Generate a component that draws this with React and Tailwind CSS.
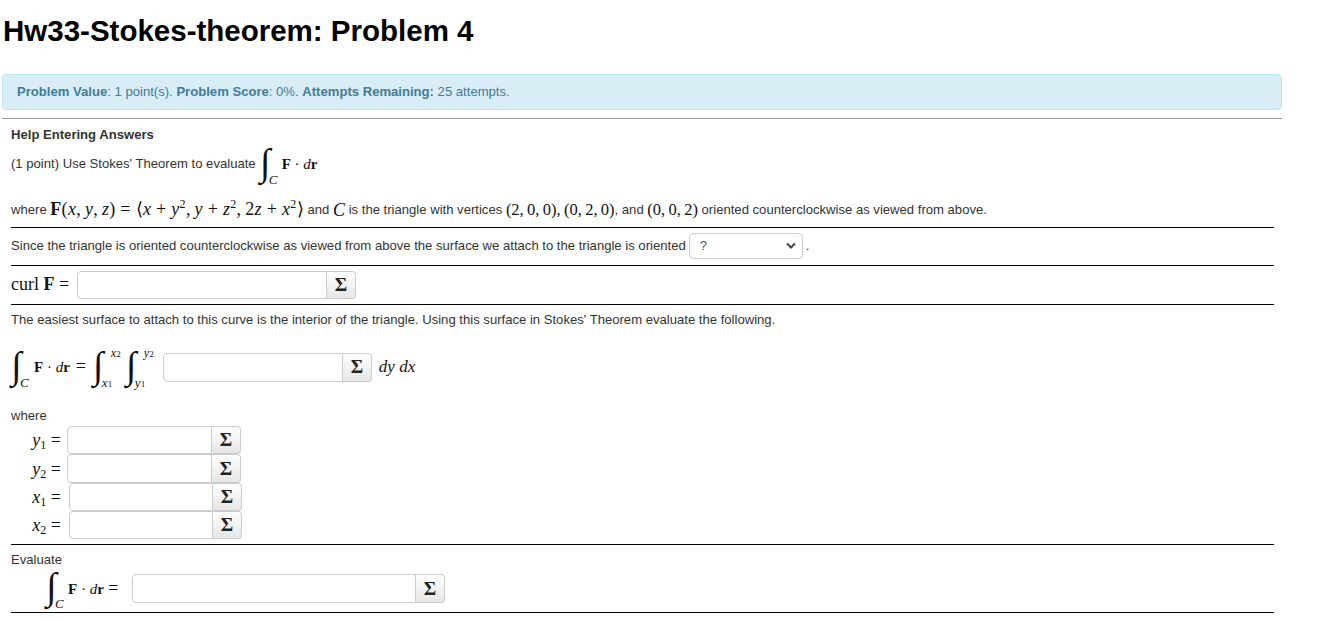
import React from "react";

const serif = "font-['Liberation_Serif',serif]";
const THIN = "\u2009";

const Mi = ({ children }) => <i className="italic">{children}</i>;
const Bf = ({ children }) => <b className="font-bold">{children}</b>;
const Sup = ({ children }) => (
  <span className="relative -top-[7px] text-[12px] leading-none">{children}</span>
);
const Sub = ({ children }) => (
  <span className="relative top-[3px] text-[12px] leading-none">{children}</span>
);

const Math = ({ children, size = "text-[18px]" }) => (
  <span className={`${serif} ${size} whitespace-pre text-[#111]`}>{children}</span>
);

// integral sign with lower bound and optional upper bound
const Integral = ({ lower, lowerSub, upper, upperSub, width = "w-[25px]" }) => (
  <span className={`${serif} relative inline-block h-[42px] shrink-0 text-[#111] ${width}`}>
    <span className="absolute left-0 top-[-3px] text-[38px] italic leading-[44px]">∫</span>
    {upper ? (
      <span className="absolute left-[18px] top-[1px] text-[12px] italic leading-none">
        {upper}
        <span className="text-[9px] not-italic">{upperSub}</span>
      </span>
    ) : null}
    <span className="absolute bottom-[-1px] left-[9px] text-[13px] italic leading-none">
      {lower}
      <span className="text-[9px] not-italic">{lowerSub}</span>
    </span>
  </span>
);

const Fdr = () => (
  <Math size="text-[15px]">
    <Bf>F</Bf> · <Mi>d</Mi>
    <Bf>r</Bf>
  </Math>
);

const Field = ({ className }) => (
  <div className={`flex shrink-0 ${className}`}>
    <input
      type="text"
      className="min-w-0 flex-1 rounded-l-[4px] border border-[#cccccc] bg-white outline-none"
    />
    <button
      type="button"
      className={`${serif} flex w-[29px] shrink-0 items-center justify-center rounded-r-[4px] border border-l-0 border-[#cccccc] bg-gradient-to-b from-white to-[#e6e6e6] text-[19px] font-bold text-[#222]`}
    >
      Σ
    </button>
  </div>
);

const LimitRow = ({ name, sub, className }) => (
  <div className="flex items-center">
    <div className="flex w-[56px] justify-end pr-[6px]">
      <Math>
        <Mi>{name}</Mi>
        <Sub>{sub}</Sub> =
      </Math>
    </div>
    <Field className={className} />
  </div>
);

export default function App() {
  return (
    <div className="min-h-[621px] w-[1332px] overflow-hidden bg-white font-['Liberation_Sans',sans-serif] text-[13.1px] leading-[18px] text-[#333333]">
      <h1 className="pl-[3px] pt-[13px] text-[29.5px] font-bold leading-[36px] text-black">
        Hw33-Stokes-theorem: Problem 4
      </h1>

      <div className="ml-[2px] mt-[25px] flex h-[36px] w-[1280px] items-center rounded-[4px] border border-[#bce8f1] bg-[#d9edf7] pl-[14px] text-[#31708f]">
        <span className="opacity-90">
          <b>Problem Value</b>: 1 point(s). <b>Problem Score</b>: 0%. <b>Attempts Remaining:</b> 25 attempts.
        </span>
      </div>

      <hr className="ml-[2px] mt-[8px] w-[1280px] border-t border-[#999999]" />

      <div className="ml-[11px] w-[1263px]">
        <div className="pt-[7px] font-bold">Help Entering Answers</div>

        <div className="flex h-[39px] items-center">
          <span>(1 point) Use Stokes' Theorem to evaluate</span>
          <span className="ml-[4px] mr-[-3px] flex">
            <Integral lower="C" />
          </span>
          <Fdr />
        </div>

        <div className="mt-[10px] flex h-[35px] items-center border-b border-black">
          <span>where&nbsp;</span>
          <span className="tracking-[0.3px]">
            <Math>
              <Bf>F</Bf>(<Mi>x</Mi>,{THIN}
              <Mi>y</Mi>,{THIN}
              <Mi>z</Mi>) = ⟨<Mi>x</Mi> + <Mi>y</Mi>
              <Sup>2</Sup>,{THIN}
              <Mi>y</Mi> + <Mi>z</Mi>
              <Sup>2</Sup>,{THIN}2<Mi>z</Mi> + <Mi>x</Mi>
              <Sup>2</Sup>⟩
            </Math>
          </span>
          <span>&nbsp;and&nbsp;</span>
          <Math>
            <Mi>C</Mi>
          </Math>
          <span>&nbsp;is the triangle with vertices&nbsp;</span>
          <Math size="text-[16.5px]">
            (2,{THIN}0,{THIN}0),{THIN}(0,{THIN}2,{THIN}0)
          </Math>
          <span>, and&nbsp;</span>
          <Math size="text-[16.5px]">
            (0,{THIN}0,{THIN}2)
          </Math>
          <span>&nbsp;oriented counterclockwise as viewed from above.</span>
        </div>

        <div className="flex h-[38px] items-center border-b border-black pb-[2px]">
          <span>Since the triangle is oriented counterclockwise as viewed from above the surface we attach to the triangle is oriented</span>
          <div className="ml-[3px] flex h-[26px] w-[114px] items-center justify-between rounded-[4px] border border-[#cccccc] px-[10px] text-[#555555]">
            <span>?</span>
            <svg width="10" height="7" viewBox="0 0 10 7" className="mr-[-4px]">
              <path d="M1 1.5l4 4 4-4" fill="none" stroke="#444" strokeWidth="2" />
            </svg>
          </div>
          <span className="ml-[3px]">.</span>
        </div>

        <div className="flex h-[39px] items-center border-b border-black">
          <span className="w-[66px]">
            <Math>
              curl <Bf>F</Bf> =
            </Math>
          </span>
          <Field className="h-[28px] w-[279px]" />
        </div>

        <div className="flex h-[30px] items-center">
          The easiest surface to attach to this curve is the interior of the triangle. Using this surface in Stokes' Theorem evaluate the following.
        </div>

        <div className="mt-[7px] flex h-[50px] items-center">
          <Integral lower="C" width="w-[23px]" />
          <Fdr />
          <span className="ml-[6px] w-[17px]">
            <Math>=</Math>
          </span>
          <Integral lower="x" lowerSub="1" upper="x" upperSub="2" width="w-[33px]" />
          <Integral lower="y" lowerSub="1" upper="y" upperSub="2" width="w-[37px]" />
          <Field className="h-[29px] w-[209px]" />
          <span className="ml-[7px]">
            <Math size="text-[17px]">
              <Mi>dy dx</Mi>
            </Math>
          </span>
        </div>

        <div className="mt-[15px]">where</div>

        <div className="flex flex-col border-b border-black pb-[5px] pt-[1px]">
          <LimitRow name="y" sub="1" className="h-[28px] w-[174px]" />
          <LimitRow name="y" sub="2" className="h-[29px] w-[174px]" />
          <LimitRow name="x" sub="1" className="ml-[2px] h-[28px] w-[173px]" />
          <LimitRow name="x" sub="2" className="ml-[2px] h-[28px] w-[173px]" />
        </div>

        <div className="mt-[6px]">Evaluate</div>

        <div className="flex h-[44px] items-start border-b border-black pl-[35px]">
          <span className="mt-[-2px] flex">
            <Integral lower="C" width="w-[22px]" />
          </span>
          <span className="mt-[10px] w-[64px] whitespace-pre">
            <Fdr />
            <Math> =</Math>
          </span>
          <Field className="mt-[5px] h-[29px] w-[313px]" />
        </div>
      </div>
    </div>
  );
}
